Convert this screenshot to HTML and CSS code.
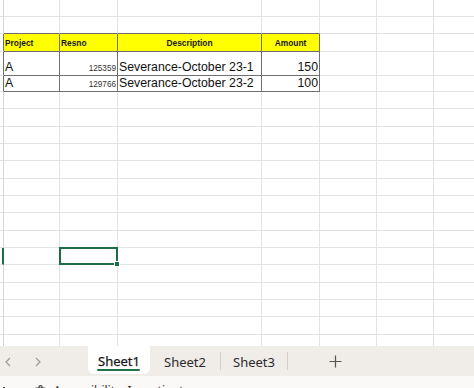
FILE: index.html
```html
<!DOCTYPE html>
<html>
<head>
<meta charset="utf-8">
<link rel="stylesheet" href="styles.css">
</head>
<body>
<div class="app">
  <div class="sheet">
    <div class="grid">
      <!-- row 0 -->
      <div class="c rh"></div><div class="c"></div><div class="c"></div><div class="c"></div><div class="c"></div><div class="c"></div><div class="c"></div><div class="c"></div>
      <!-- row 1 -->
      <div class="c rh"></div><div class="c ab"></div><div class="c ab"></div><div class="c ab"></div><div class="c ab"></div><div class="c"></div><div class="c"></div><div class="c"></div>
      <!-- header -->
      <div class="c rh rht"></div>
      <div class="c hd">Project</div>
      <div class="c hd">Resno</div>
      <div class="c hd ctr">Description</div>
      <div class="c hd ctr">Amount</div>
      <div class="c"></div><div class="c"></div><div class="c"></div>
      <!-- data 1 -->
      <div class="c rh rht"></div>
      <div class="c td">A</div>
      <div class="c td num sm">125359</div>
      <div class="c td">Severance-October 23-1</div>
      <div class="c td num">150</div>
      <div class="c"></div><div class="c"></div><div class="c"></div>
      <!-- data 2 -->
      <div class="c rh rht"></div>
      <div class="c td">A</div>
      <div class="c td num sm">129766</div>
      <div class="c td">Severance-October 23-2</div>
      <div class="c td num">100</div>
      <div class="c"></div><div class="c"></div><div class="c"></div>
      <!-- empty rows -->
      <div class="c rh"></div><div class="c"></div><div class="c"></div><div class="c"></div><div class="c"></div><div class="c"></div><div class="c"></div><div class="c"></div>
      <div class="c rh"></div><div class="c"></div><div class="c"></div><div class="c"></div><div class="c"></div><div class="c"></div><div class="c"></div><div class="c"></div>
      <div class="c rh"></div><div class="c"></div><div class="c"></div><div class="c"></div><div class="c"></div><div class="c"></div><div class="c"></div><div class="c"></div>
      <div class="c rh"></div><div class="c"></div><div class="c"></div><div class="c"></div><div class="c"></div><div class="c"></div><div class="c"></div><div class="c"></div>
      <div class="c rh"></div><div class="c"></div><div class="c"></div><div class="c"></div><div class="c"></div><div class="c"></div><div class="c"></div><div class="c"></div>
      <div class="c rh"></div><div class="c"></div><div class="c"></div><div class="c"></div><div class="c"></div><div class="c"></div><div class="c"></div><div class="c"></div>
      <div class="c rh"></div><div class="c"></div><div class="c"></div><div class="c"></div><div class="c"></div><div class="c"></div><div class="c"></div><div class="c"></div>
      <div class="c rh"></div><div class="c"></div><div class="c"></div><div class="c"></div><div class="c"></div><div class="c"></div><div class="c"></div><div class="c"></div>
      <div class="c rh"></div><div class="c"></div><div class="c"></div><div class="c"></div><div class="c"></div><div class="c"></div><div class="c"></div><div class="c"></div>
      <!-- selected row -->
      <div class="c rh rhs"></div><div class="c"></div><div class="c sel"></div><div class="c"></div><div class="c"></div><div class="c"></div><div class="c"></div><div class="c"></div>
      <div class="c rh"></div><div class="c"></div><div class="c"></div><div class="c"></div><div class="c"></div><div class="c"></div><div class="c"></div><div class="c"></div>
      <div class="c rh"></div><div class="c"></div><div class="c"></div><div class="c"></div><div class="c"></div><div class="c"></div><div class="c"></div><div class="c"></div>
      <div class="c rh"></div><div class="c"></div><div class="c"></div><div class="c"></div><div class="c"></div><div class="c"></div><div class="c"></div><div class="c"></div>
      <div class="c rh"></div><div class="c"></div><div class="c"></div><div class="c"></div><div class="c"></div><div class="c"></div><div class="c"></div><div class="c"></div>
      <div class="c rh"></div><div class="c"></div><div class="c"></div><div class="c"></div><div class="c"></div><div class="c"></div><div class="c"></div><div class="c"></div>
    </div>
  </div>
  <div class="tabs">
    <div class="nav">
      <svg class="chev" width="6" height="10" viewBox="0 0 6 10"><path d="M5 1 L1 5 L5 9" fill="none" stroke="#9b9b9b" stroke-width="1.2"/></svg>
      <svg class="chev" width="6" height="10" viewBox="0 0 6 10"><path d="M1 1 L5 5 L1 9" fill="none" stroke="#9b9b9b" stroke-width="1.2"/></svg>
    </div>
    <div class="tab active"><span class="label">Sheet1</span></div>
    <div class="tab t2"><span class="label">Sheet2</span></div>
    <div class="sep"></div>
    <div class="tab t3"><span class="label">Sheet3</span></div>
    <div class="sep"></div>
    <div class="add">
      <svg width="13" height="13" viewBox="0 0 13 13"><path d="M6.5 0.5 V12.5 M0.5 6.5 H12.5" stroke="#555" stroke-width="1.2"/></svg>
    </div>
  </div>
  <div class="status">
    <span class="tick"></span>
    <svg class="acc" width="13" height="14" viewBox="0 0 13 14"><rect x="1" y="3" width="11" height="10" rx="1.5" fill="none" stroke="#444" stroke-width="1.2"/><circle cx="6.5" cy="2.2" r="1.6" fill="none" stroke="#444" stroke-width="1.2"/><path d="M3 6 H10" stroke="#444" stroke-width="1.2"/></svg>
    <span class="stext">Accessibility: Investigate</span>
  </div>
</div>
</body>
</html>
```
FILE: styles.css
```css
html, body {
  margin: 0;
  padding: 0;
  width: 474px;
  height: 388px;
  overflow: hidden;
  background: #ffffff;
}

.app {
  display: flex;
  flex-direction: column;
  width: 474px;
  height: 388px;
}

.sheet {
  height: 346px;
  flex: none;
  overflow: hidden;
  background: #fff;
}

.grid {
  display: grid;
  grid-template-columns: 4px 56px 58px 144px 58px 57px 57px 60px;
  grid-template-rows: 17px 17px 18px 24px 16px repeat(15, 17.33px);
  width: 494px;
}

.c {
  box-sizing: border-box;
  border-right: 1px solid #e3e3e3;
  border-bottom: 1px solid #e3e3e3;
  font-family: "Liberation Sans", Arial, sans-serif;
  font-size: 12.3px;
  color: #111;
  display: flex;
  align-items: flex-end;
  white-space: nowrap;
  overflow: visible;
  min-width: 0;
}

.rh {
  border-right: 1px solid #d6d6d6;
}

.rht {
  border-right-color: #6f6f6f;
}

.rhs {
  border-right: 2px solid #1f6e43;
}

.ab {
  border-bottom-color: #6f6f6f;
}

.hd {
  background: #ffff00;
  border-right-color: #6f6f6f;
  border-bottom-color: #6f6f6f;
  font-weight: bold;
  font-size: 8.4px;
  color: #1a1a1a;
  align-items: center;
  padding-left: 1px;
}

.hd.ctr {
  justify-content: center;
  padding-left: 0;
}

.td {
  border-right-color: #6f6f6f;
  border-bottom-color: #6f6f6f;
  padding-left: 1px;
  padding-bottom: 1px;
}

.num {
  justify-content: flex-end;
  padding-right: 1px;
  padding-left: 0;
}

.sm {
  font-size: 8.2px;
  color: #333;
  padding-bottom: 2px;
}

.sel {
  position: relative;
}

.sel::after {
  content: "";
  position: absolute;
  left: -1px;
  top: -1px;
  right: -1px;
  bottom: -1px;
  border: 2px solid #1f6e43;
  z-index: 2;
}

.sel::before {
  content: "";
  position: absolute;
  right: -3px;
  bottom: -3px;
  width: 4px;
  height: 4px;
  background: #1f6e43;
  border: 1px solid #fff;
  z-index: 3;
}

.tabs {
  height: 30px;
  flex: none;
  display: flex;
  align-items: flex-start;
  background: #f0ece7;
  font-family: "Noto Sans", "Open Sans", sans-serif;
  font-size: 13px;
  color: #2b2b2b;
}

.nav {
  width: 88px;
  height: 28px;
  display: flex;
  align-items: center;
  gap: 24px;
  padding-left: 5px;
  padding-top: 3px;
  box-sizing: border-box;
}

.tab {
  height: 28px;
  display: flex;
  align-items: center;
  box-sizing: border-box;
  padding-top: 1px;
}

.tab .label {
  line-height: 16px;
}

.tab.active {
  width: 62px;
  background: #ffffff;
  border-radius: 0 0 6px 6px;
  padding-left: 10px;
  position: relative;
  color: #1a1a1a;
  -webkit-text-stroke: 0.25px #1a1a1a;
}

.tab.active::after {
  content: "";
  position: absolute;
  left: 9px;
  width: 43px;
  bottom: 3px;
  height: 2px;
  border-radius: 1px;
  background: #1e7145;
}

.t2 {
  width: 70px;
  padding-left: 14px;
  padding-top: 3px;
}

.t3 {
  width: 66px;
  padding-left: 12px;
  padding-top: 3px;
}

.sep {
  width: 1px;
  height: 18px;
  margin-top: 6px;
  background: #d5cfc8;
}

.add {
  height: 28px;
  display: flex;
  align-items: center;
  padding-left: 41px;
  padding-top: 3px;
  box-sizing: border-box;
}

.status {
  flex: none;
  height: 12px;
  background: #faf9f8;
  display: flex;
  align-items: flex-start;
  padding-top: 7px;
  box-sizing: border-box;
  font-family: "Noto Sans", "Open Sans", sans-serif;
  font-size: 12px;
  color: #333;
  overflow: hidden;
}

.tick {
  width: 1.5px;
  height: 10px;
  margin-top: 4px;
  margin-left: 3px;
  flex: none;
  background: #444;
}

.acc {
  margin-left: 29px;
  margin-top: 2px;
  flex: none;
}

.stext {
  margin-left: 7px;
  line-height: 16px;
}
```
